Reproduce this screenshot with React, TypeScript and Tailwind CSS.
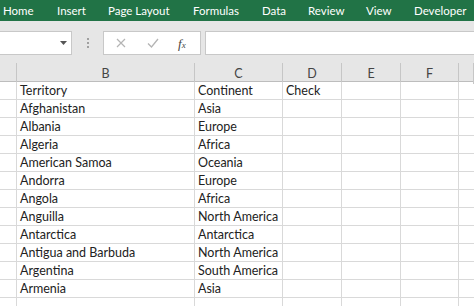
import React from "react";

// tab label, slot width measured from the screenshot
const tabs: [string, string][] = [
    ["Home", "w-[54px]"],
    ["Insert", "w-[51px]"],
    ["Page Layout", "w-[85px]"],
    ["Formulas", "w-[69px]"],
    ["Data", "w-[46px]"],
    ["Review", "w-[58px]"],
    ["View", "w-[48px]"],
    ["Developer", "flex-1"],
];

const columns = ["", "B", "C", "D", "E", "F", ""];

const rows: [string, string, string][] = [
    ["Territory", "Continent", "Check"],
    ["Afghanistan", "Asia", ""],
    ["Albania", "Europe", ""],
    ["Algeria", "Africa", ""],
    ["American Samoa", "Oceania", ""],
    ["Andorra", "Europe", ""],
    ["Angola", "Africa", ""],
    ["Anguilla", "North America", ""],
    ["Antarctica", "Antarctica", ""],
    ["Antigua and Barbuda", "North America", ""],
    ["Argentina", "South America", ""],
    ["Armenia", "Asia", ""],
    ["", "", ""],
];

const gridCols = "grid grid-cols-[17px_178px_88px_59px_59px_58px_1fr]";

const App = () => {
    return (
        <div className="w-[474px] h-[306px] overflow-hidden bg-white font-['Lato','Liberation_Sans',sans-serif] text-[#222]">
            {/* ribbon tabs */}
            <div className="h-[21px] bg-[#217346] flex items-center pl-[3px] text-white text-[11.5px]">
                {tabs.map(([tab, w]) => (
                    <span key={tab} className={`${w} shrink-0 whitespace-nowrap`}>
                        {tab}
                    </span>
                ))}
            </div>

            {/* formula bar */}
            <div className="h-[34px] bg-[#e6e6e6] pt-[10px]">
                <div className="flex items-stretch h-[24px]">
                    <div className="w-[72px] bg-white border border-[#c8c8c8] border-l-0 flex items-center justify-end pr-[4px]">
                        <svg width="7" height="4" viewBox="0 0 7 4">
                            <path d="M0 0 L7 0 L3.5 4 Z" fill="#555" />
                        </svg>
                    </div>
                    <div className="w-[31px] flex flex-col items-center justify-center gap-[2px]">
                        <span className="w-[2px] h-[2px] bg-[#a0a0a0]" />
                        <span className="w-[2px] h-[2px] bg-[#a0a0a0]" />
                        <span className="w-[2px] h-[2px] bg-[#a0a0a0]" />
                    </div>
                    <div className="w-[98px] bg-white border border-[#c8c8c8] flex items-center">
                        <svg className="ml-[12px]" width="10" height="10" viewBox="0 0 10 10">
                            <path d="M1 1 L9 9 M9 1 L1 9" stroke="#b4b4b4" strokeWidth="1.2" />
                        </svg>
                        <svg className="ml-[21px]" width="12" height="10" viewBox="0 0 12 10">
                            <path d="M1 5.5 L4.5 9 L11 1" stroke="#b4b4b4" strokeWidth="1.3" fill="none" />
                        </svg>
                        <span className="ml-[19px] font-['Liberation_Serif',serif] italic text-[13px] text-[#444] leading-none">
                            f<span className="text-[9px]">x</span>
                        </span>
                    </div>
                    <div className="flex-1 ml-[4px] bg-white border border-[#c8c8c8] border-r-0" />
                </div>
            </div>

            {/* sheet */}
            <div className="bg-[#e6e6e6] pt-[8px]">
                <div className={`${gridCols} h-[19px] border-b border-[#bdbdbd] text-[12.5px] text-[#444]`}>
                    {columns.map((c, i) => (
                        <div
                            key={i}
                            className="border-r border-[#c6c6c6] flex items-center justify-center pt-[2px]"
                        >
                            {c}
                        </div>
                    ))}
                </div>
            </div>
            <div className="bg-white">
                {rows.map((row, r) => (
                    <div key={r} className={`${gridCols} h-[18px] text-[12.5px]`}>
                        <div className="border-r border-b border-[#d9d9d9]" />
                        {row.map((cell, c) => (
                            <div
                                key={c}
                                className="border-r border-b border-[#d9d9d9] pl-[3px] pt-[2px] flex items-center whitespace-nowrap overflow-hidden"
                            >
                                {cell}
                            </div>
                        ))}
                        <div className="border-r border-b border-[#d9d9d9]" />
                        <div className="border-r border-b border-[#d9d9d9]" />
                        <div className="border-b border-[#d9d9d9]" />
                    </div>
                ))}
            </div>
        </div>
    );
};

export default App;
